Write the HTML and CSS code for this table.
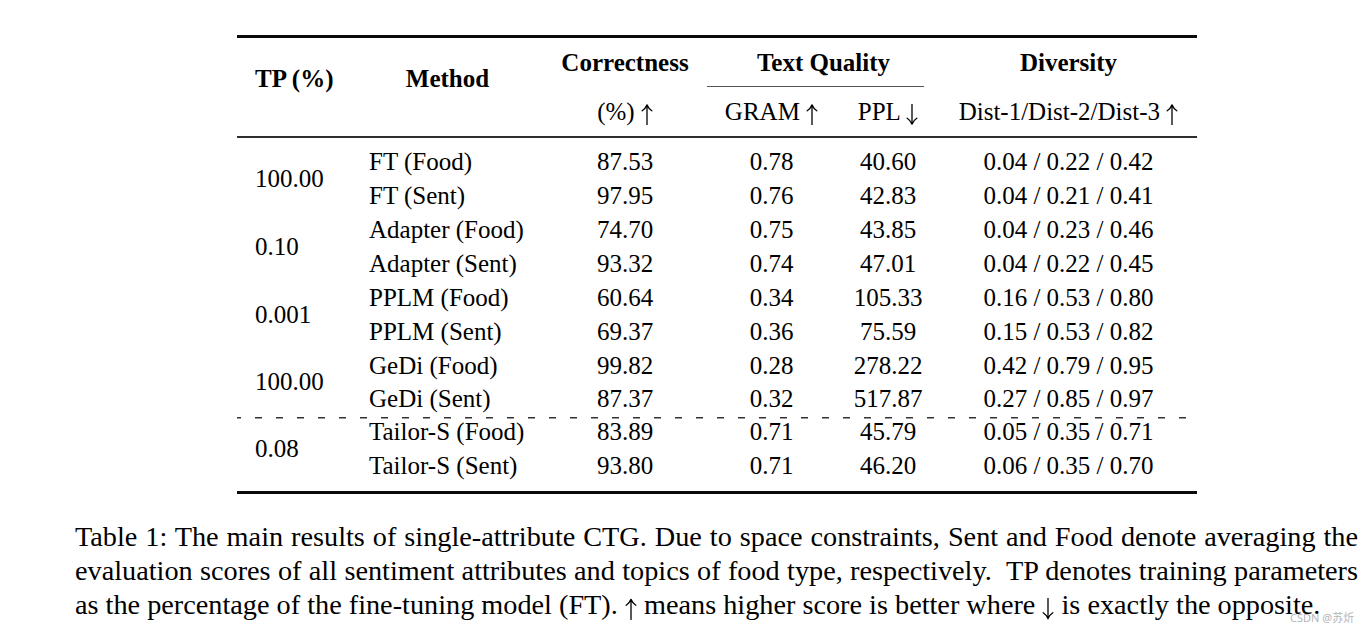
FILE: index.html
```html
<!DOCTYPE html>
<html>
<head>
<meta charset="utf-8">
<link rel="stylesheet" href="styles.css">
</head>
<body>
<div class="page">
  <table class="results">
    <colgroup>
      <col class="w-tp"><col class="w-method"><col class="w-corr"><col class="w-gram"><col class="w-ppl"><col class="w-div">
    </colgroup>
    <thead>
      <tr class="head-1">
        <th class="tp head-span" rowspan="2">TP (%)</th>
        <th class="method head-span" rowspan="2">Method</th>
        <th>Correctness</th>
        <th class="group" colspan="2">Text Quality</th>
        <th>Diversity</th>
      </tr>
      <tr class="head-2">
        <td>(%) <svg class="arrow" viewBox="0 0 12 21" aria-label="↑"><path d="M6 1.2V21M1.2 6.8C3.4 5.4 5 3.4 6 0.8C7 3.4 8.6 5.4 10.8 6.8"/></svg></td>
        <td>GRAM <svg class="arrow" viewBox="0 0 12 21" aria-label="↑"><path d="M6 1.2V21M1.2 6.8C3.4 5.4 5 3.4 6 0.8C7 3.4 8.6 5.4 10.8 6.8"/></svg></td>
        <td>PPL <svg class="arrow" viewBox="0 0 12 21" aria-label="↓"><path d="M6 0V19.8M1.2 14.2C3.4 15.6 5 17.6 6 20.2C7 17.6 8.6 15.6 10.8 14.2"/></svg></td>
        <td>Dist-1/Dist-2/Dist-3 <svg class="arrow" viewBox="0 0 12 21" aria-label="↑"><path d="M6 1.2V21M1.2 6.8C3.4 5.4 5 3.4 6 0.8C7 3.4 8.6 5.4 10.8 6.8"/></svg></td>
      </tr>
    </thead>
    <tbody>
      <tr class="first">
        <td class="tp" rowspan="2">100.00</td><td class="method">FT (Food)</td><td>87.53</td><td>0.78</td><td>40.60</td><td>0.04 / 0.22 / 0.42</td>
      </tr>
      <tr>
        <td class="method">FT (Sent)</td><td>97.95</td><td>0.76</td><td>42.83</td><td>0.04 / 0.21 / 0.41</td>
      </tr>
      <tr>
        <td class="tp" rowspan="2">0.10</td><td class="method">Adapter (Food)</td><td>74.70</td><td>0.75</td><td>43.85</td><td>0.04 / 0.23 / 0.46</td>
      </tr>
      <tr>
        <td class="method">Adapter (Sent)</td><td>93.32</td><td>0.74</td><td>47.01</td><td>0.04 / 0.22 / 0.45</td>
      </tr>
      <tr>
        <td class="tp" rowspan="2">0.001</td><td class="method">PPLM (Food)</td><td>60.64</td><td>0.34</td><td>105.33</td><td>0.16 / 0.53 / 0.80</td>
      </tr>
      <tr>
        <td class="method">PPLM (Sent)</td><td>69.37</td><td>0.36</td><td>75.59</td><td>0.15 / 0.53 / 0.82</td>
      </tr>
      <tr>
        <td class="tp" rowspan="2">100.00</td><td class="method">GeDi (Food)</td><td>99.82</td><td>0.28</td><td>278.22</td><td>0.42 / 0.79 / 0.95</td>
      </tr>
      <tr class="before-dash">
        <td class="method">GeDi (Sent)</td><td>87.37</td><td>0.32</td><td>517.87</td><td>0.27 / 0.85 / 0.97</td>
      </tr>
      <tr class="dash-top">
        <td class="tp last-tp" rowspan="2">0.08</td><td class="method">Tailor-S (Food)</td><td>83.89</td><td>0.71</td><td>45.79</td><td>0.05 / 0.35 / 0.71</td>
      </tr>
      <tr class="last">
        <td class="method">Tailor-S (Sent)</td><td>93.80</td><td>0.71</td><td>46.20</td><td>0.06 / 0.35 / 0.70</td>
      </tr>
    </tbody>
  </table>

  <div class="caption">
    <div class="cap-line justified">Table 1: The main results of single-attribute CTG. Due to space constraints, Sent and Food denote averaging the</div>
    <div class="cap-line justified">evaluation scores of all sentiment attributes and topics of food type, respectively.&nbsp; TP denotes training parameters</div>
    <div class="cap-line">as the percentage of the fine-tuning model (FT). <svg class="arrow cap-arrow" viewBox="0 0 12 21" aria-label="↑"><path d="M6 1.2V21M1.2 6.8C3.4 5.4 5 3.4 6 0.8C7 3.4 8.6 5.4 10.8 6.8"/></svg> means higher score is better where <svg class="arrow cap-arrow" viewBox="0 0 12 21" aria-label="↓"><path d="M6 0V19.8M1.2 14.2C3.4 15.6 5 17.6 6 20.2C7 17.6 8.6 15.6 10.8 14.2"/></svg> is exactly the opposite.</div>
  </div>

  <span class="watermark">CSDN @苏炘</span>
</div>
</body>
</html>
```

FILE: styles.css
```css
html, body {
  margin: 0;
  padding: 0;
  background: #ffffff;
}

.page {
  position: relative;
  width: 1371px;
  height: 634px;
  overflow: hidden;
  padding-top: 35px;
  box-sizing: border-box;
  font-family: "Liberation Serif", "Times New Roman", serif;
  color: #000;
}

.results {
  margin-left: 237px;
  width: 960px;
  table-layout: fixed;
  border-collapse: separate;
  border-spacing: 0;
  font-size: 25px;
  line-height: 34px;
}

.w-tp { width: 115px; }
.w-method { width: 191px; }
.w-corr { width: 164px; }
.w-gram { width: 129px; }
.w-ppl { width: 104px; }
.w-div { width: 257px; }

.results th,
.results td {
  padding: 0;
  text-align: center;
  white-space: nowrap;
  vertical-align: middle;
}

.results th {
  font-weight: bold;
}

.head-1 th {
  border-top: 3px solid #0a0a0a;
  padding: 8px 0 7px;
}

.head-2 td {
  padding: 8px 0 7px;
  border-bottom: 2px solid #2e2e2e;
}

.results .head-span {
  padding: 0 0 16px;
  border-bottom: 2px solid #2e2e2e;
}

.head-1 .group {
  background-image: linear-gradient(#555, #555);
  background-repeat: no-repeat;
  background-position: 0 100%;
  background-size: calc(100% - 16px) 1px;
}

.results .tp {
  text-align: left;
  padding-left: 18px;
}

.results .method {
  text-align: left;
  padding-left: 17px;
}

.results .head-span.method {
  text-align: center;
  padding-left: 0;
  padding-right: 0;
}

.first td {
  padding-top: 7px;
}

.before-dash td {
  line-height: 32px;
}

.dash-top {
  background-image: repeating-linear-gradient(to right, #333 0 7px, transparent 7px 21px);
  background-repeat: no-repeat;
  background-position: -3px 2px;
  background-size: calc(100% + 3px) 1.5px;
}

.last td {
  padding-bottom: 8px;
  border-bottom: 3px solid #0a0a0a;
}

.results .last-tp {
  padding-bottom: 8px;
  border-bottom: 3px solid #0a0a0a;
}

.arrow {
  display: inline-block;
  width: 12px;
  height: 21px;
  vertical-align: -5px;
  fill: none;
  stroke: #000;
  stroke-width: 1.3;
  stroke-linecap: round;
  stroke-linejoin: round;
}

.cap-arrow {
  width: 12px;
  height: 22px;
  vertical-align: -6px;
}

.caption {
  width: 1283px;
  margin-top: 26px;
  margin-left: 75px;
  font-size: 28.25px;
  line-height: 34px;
}

.cap-line {
  white-space: nowrap;
}

.cap-line.justified {
  text-align: justify;
  text-align-last: justify;
}

.watermark {
  position: absolute;
  left: 1290px;
  top: 611px;
  font-family: "Noto Sans", "Noto Sans CJK SC", sans-serif;
  font-size: 11px;
  line-height: 14px;
  color: #b5b5b5;
}
```
